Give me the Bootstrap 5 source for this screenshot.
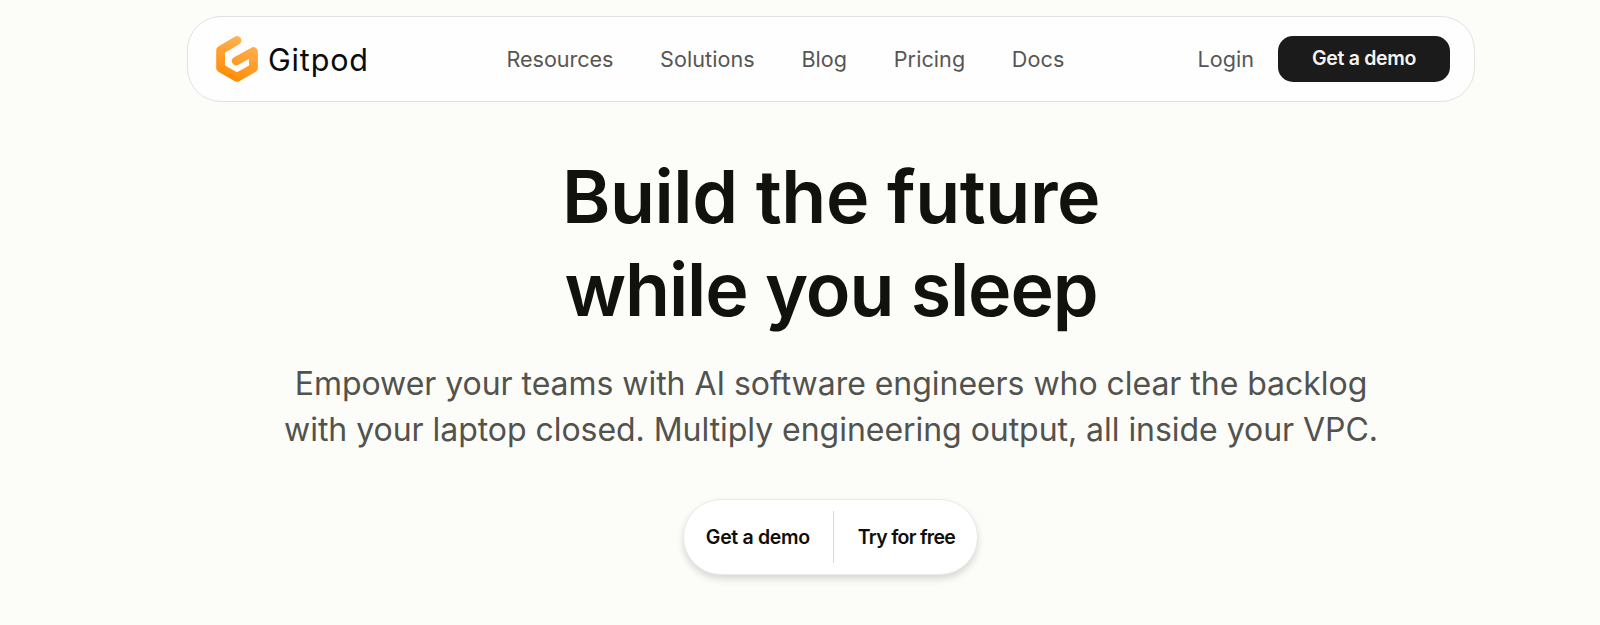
<!DOCTYPE html>
<html lang="en">
<head>
<meta charset="utf-8">
<meta name="viewport" content="width=device-width, initial-scale=1">
<title>Gitpod</title>
<link href="https://cdn.jsdelivr.net/npm/bootstrap@5.3.0/dist/css/bootstrap.min.css" rel="stylesheet">
<style>
body{background:#fcfdf9;color:#11110d;font-family:Inter,"Liberation Sans",sans-serif;height:625px;overflow:hidden}
.shell{width:1288px;margin-left:187px;padding-top:16px}
.site-nav{height:86px;background:#fefefe;border:1px solid #e2e2e0;border-radius:34px;padding:0 24px 0 28px}
.brand-name{font:400 30.5px/36px Inter,sans-serif;letter-spacing:.85px;color:#0b0b0b;margin-left:10px;padding-top:2px;width:238.5px}
.menu{gap:46.6px}
.menu a,.login{font-size:21.6px;line-height:30px;padding-bottom:1px;color:#575653;text-decoration:none;white-space:nowrap}
.menu a:first-child{letter-spacing:-.05px}
.menu a:not(:first-child){letter-spacing:.06px}
.demo{width:172px;height:46px;border-radius:15px;background:#1a1b1a;color:#f3f3f1}
.demo,.pair a{font-family:Inter,sans-serif;font-weight:600;font-size:19.5px;line-height:26px;letter-spacing:-.33px;text-decoration:none;white-space:nowrap}
.demo{padding-bottom:2px}
h1{font:600 73.5px/93px Inter,sans-serif;letter-spacing:-.42px;margin:48px 0 0}
h1 span+br+span{letter-spacing:-1.1px}
.intro{font-size:32px;line-height:46px;letter-spacing:-.04px;color:#52524e;margin:25px 0 0}
.intro span,h1 span{white-space:nowrap}
.pair{width:295px;height:76px;gap:23.5px;margin:46px 0 0 496px;border-radius:38px;background:#fff;border:1px solid #e9e9e7;box-shadow:0 4px 7px rgba(0,0,0,.15)}
.pair a{color:#0e0e0d}
.pair a:last-child{letter-spacing:-.7px}
.rule{width:1px;height:52px;background:#d8d8d7}
</style>
<script src="https://cdn.jsdelivr.net/npm/bootstrap@5.3.0/dist/js/bootstrap.bundle.min.js"></script>
</head>
<body>
<div class="shell">
<nav class="site-nav d-flex align-items-center">
<svg width="42" height="46" viewBox="0 0 42 46" fill="none"><defs><linearGradient id="g" x1="30" y1="0" x2="12" y2="46" gradientUnits="userSpaceOnUse"><stop stop-color="#ffb45b"/><stop offset="1" stop-color="#ff8a00"/></linearGradient></defs><path d="M21 4.5 4.6 14.2V32l16.4 9.4L37.5 32V15.5L20.2 25" stroke="url(#g)" stroke-width="8.8" stroke-linecap="round" stroke-linejoin="round"/></svg>
<div class="brand-name"><span>Gitpod</span></div>
<div class="menu d-flex"><a href="#">Resources</a><a href="#">Solutions</a><a href="#">Blog</a><a href="#">Pricing</a><a href="#">Docs</a></div>
<a class="login ms-auto me-4" href="#">Login</a>
<a class="demo d-flex align-items-center justify-content-center" href="#"><span>Get a demo</span></a>
</nav>
<main class="text-center">
<h1><span>Build the future</span><br><span>while you sleep</span></h1>
<p class="intro"><span>Empower your teams with AI software engineers who clear the backlog</span><br><span>with your laptop closed. Multiply engineering output, all inside your VPC.</span></p>
<div class="pair d-flex align-items-center justify-content-center"><a href="#">Get a demo</a><div class="rule"></div><a href="#">Try for free</a></div>
</main>
</div>
</body>
</html>
